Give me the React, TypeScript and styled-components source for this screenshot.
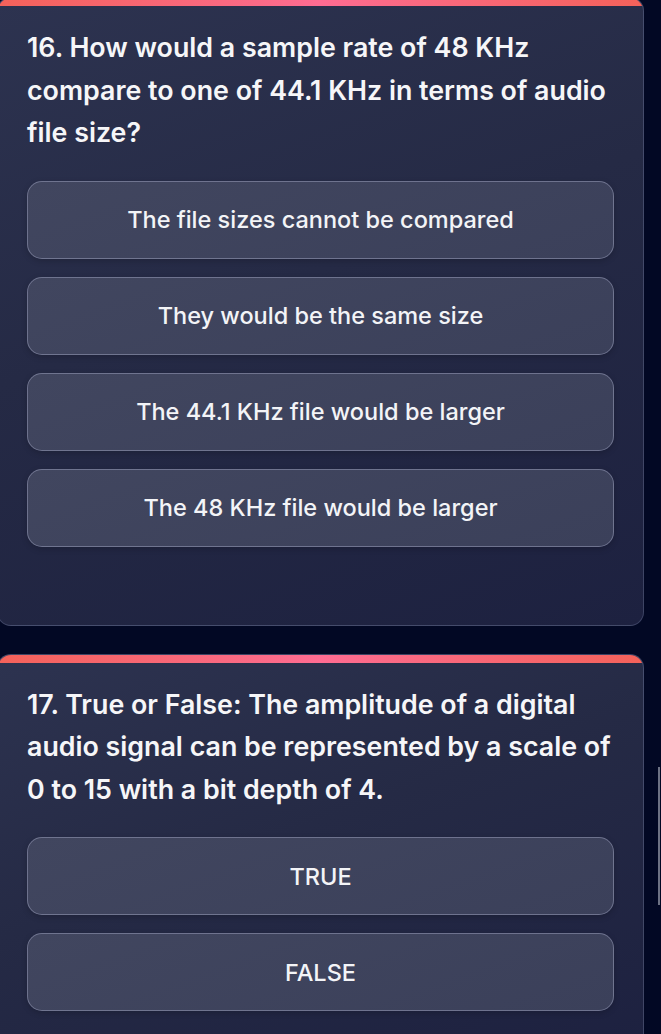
import React from 'react';
import styled, { createGlobalStyle } from 'styled-components';

const GlobalStyle = createGlobalStyle`
  html, body {
    margin: 0;
    padding: 0;
    background: #020824;
  }
  body {
    font-family: 'Inter', 'Roboto', sans-serif;
    color: #f4f5f8;
    overflow: hidden;
  }
`;

const Page = styled.div`
  width: 661px;
  height: 1034px;
  position: relative;
  overflow: hidden;
  background: #020824;
`;

const List = styled.div`
  display: flex;
  flex-direction: column;
  gap: 28px;
  margin-top: -3px;
  margin-left: -3px;
  width: 647px;
`;

const Card = styled.section`
  position: relative;
  border-radius: 14px;
  overflow: hidden;
  border: 1px solid rgba(140, 150, 190, 0.28);
  background: linear-gradient(160deg, #2d3350 0%, #252a45 45%, #1d2140 100%);
  padding: 8px 29px 78px 29px;
  box-sizing: border-box;

  &::before {
    content: '';
    position: absolute;
    top: 0;
    left: 0;
    right: 0;
    height: 8px;
    background: linear-gradient(90deg, #f4625a 0%, #fb6a86 40%, #ff6c92 50%, #fb6a86 60%, #f4625a 100%);
  }
`;

const Question = styled.h2`
  margin: 20px 0 27px 0;
  font-size: 26.8px;
  line-height: 42.5px;
  font-weight: 600;
  letter-spacing: 0;
  color: #f6f6f8;
`;

const Options = styled.div`
  display: flex;
  flex-direction: column;
  gap: 18px;
`;

const Option = styled.button`
  height: 78px;
  width: 100%;
  border-radius: 15px;
  border: 1px solid rgba(170, 176, 205, 0.45);
  background: linear-gradient(160deg, #41465f 0%, #3b405a 100%);
  color: #f3f4f7;
  font-family: 'Inter', 'Roboto', sans-serif;
  font-size: 23.5px;
  font-weight: 500;
  display: flex;
  align-items: center;
  justify-content: center;
  box-shadow: 0 2px 6px rgba(0, 0, 0, 0.18);
  cursor: pointer;
  padding: 0 16px;
`;

const LastCard = styled(Card)`
  padding-bottom: 40px;
`;

const ScrollMark = styled.div`
  position: absolute;
  right: 1px;
  top: 767px;
  width: 2px;
  height: 138px;
  background: #6d7284;
`;

const quiz = [
  {
    q: '16. How would a sample rate of 48 KHz compare to one of 44.1 KHz in terms of audio file size?',
    options: [
      'The file sizes cannot be compared',
      'They would be the same size',
      'The 44.1 KHz file would be larger',
      'The 48 KHz file would be larger',
    ],
  },
  {
    q: '17. True or False: The amplitude of a digital audio signal can be represented by a scale of 0 to 15 with a bit depth of 4.',
    options: ['TRUE', 'FALSE'],
  },
];

const App = () => {
  return (
    <Page>
      <GlobalStyle />
      <List>
        {quiz.map((item, i) => {
          const Wrapper = i === quiz.length - 1 ? LastCard : Card;
          return (
            <Wrapper key={i}>
              <Question>{item.q}</Question>
              <Options>
                {item.options.map((opt) => (
                  <Option key={opt}>{opt}</Option>
                ))}
              </Options>
            </Wrapper>
          );
        })}
      </List>
      <ScrollMark />
    </Page>
  );
};

export default App;
